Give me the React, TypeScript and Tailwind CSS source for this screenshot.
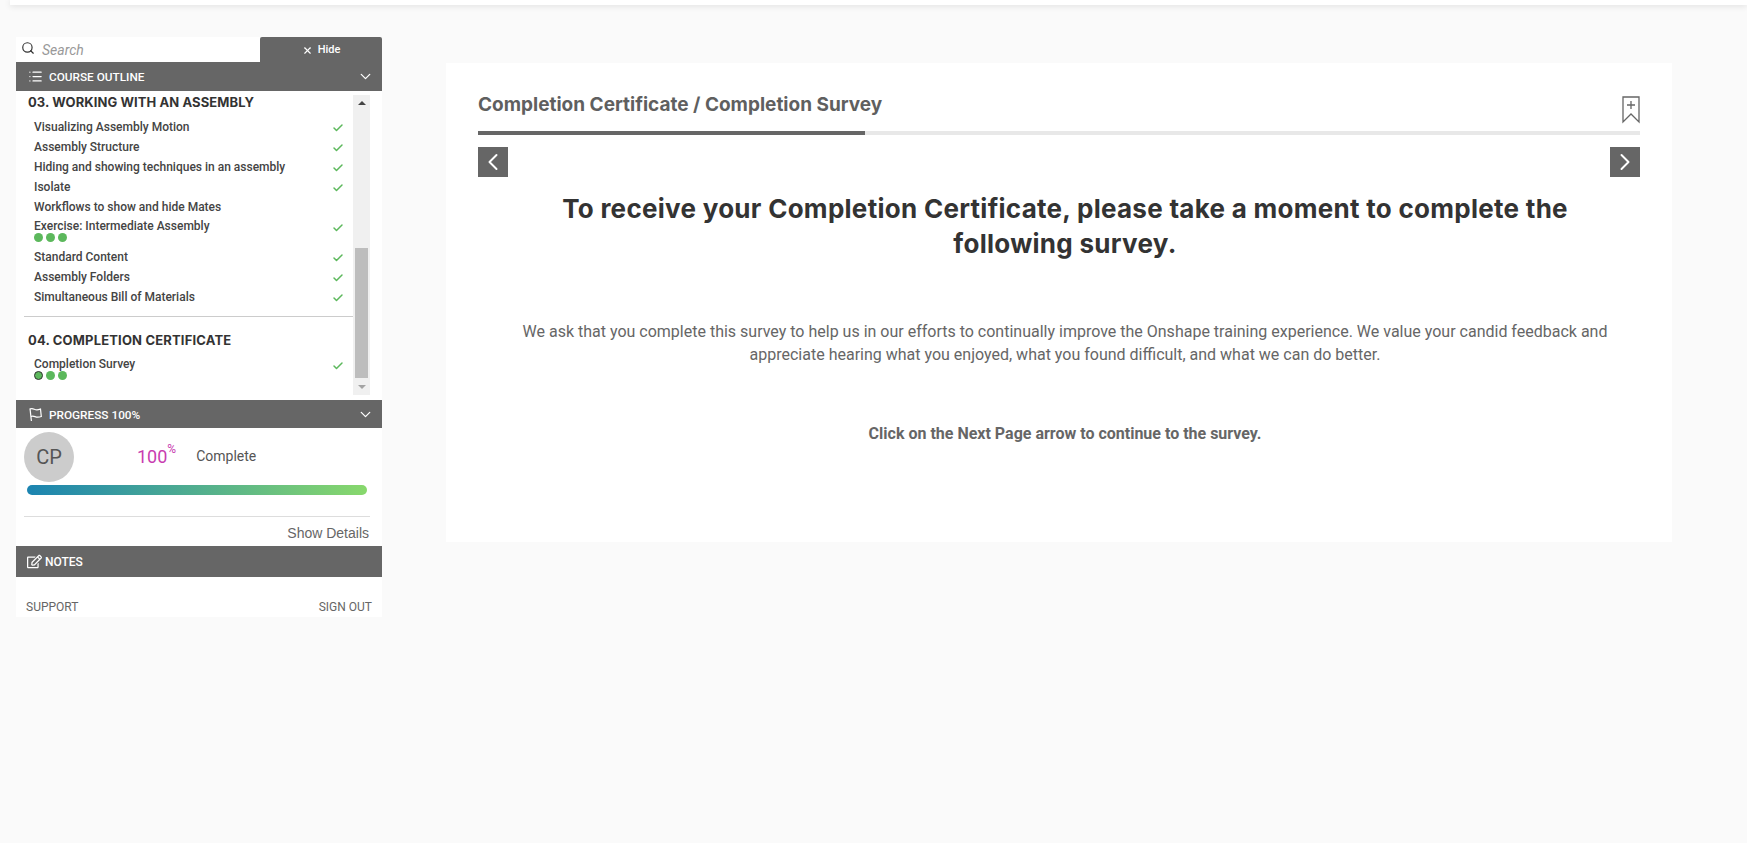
import { Check, ChevronDown, ChevronLeft, ChevronRight, List, Search, X } from 'lucide-react';
import { FaRegEdit } from 'react-icons/fa';

const din = 'font-["Inter","Roboto",sans-serif]';

interface Lesson {
  title: string;
  done: boolean;
  dots?: boolean;
  firstDark?: boolean;
}

const section3: Lesson[] = [
  { title: 'Visualizing Assembly Motion', done: true },
  { title: 'Assembly Structure', done: true },
  { title: 'Hiding and showing techniques in an assembly', done: true },
  { title: 'Isolate', done: true },
  { title: 'Workflows to show and hide Mates', done: false },
  { title: 'Exercise: Intermediate Assembly', done: true, dots: true },
  { title: 'Standard Content', done: true },
  { title: 'Assembly Folders', done: true },
  { title: 'Simultaneous Bill of Materials', done: true },
];

function LessonRow({ lesson }: { lesson: Lesson }) {
  return (
    <div className={`flex items-start pl-[18px] pr-[9px] ${lesson.dots ? 'h-[30px]' : 'h-5'}`}>
      <div className={`flex-1 ${lesson.dots ? 'mt-[-1px]' : ''}`}>
        <div className="text-[12px] leading-5 font-medium text-[#444] h-[18px]">{lesson.title}</div>
        {lesson.dots && (
          <div className="flex gap-[3px] mt-[-1px]">
            <span className={`size-[9px] rounded-full bg-[#5cb85c] ${lesson.firstDark ? 'border border-[#333]' : ''}`} />
            <span className="size-[9px] rounded-full bg-[#5cb85c]" />
            <span className="size-[9px] rounded-full bg-[#5cb85c]" />
          </div>
        )}
      </div>
      {lesson.done && <Check className="size-3 mt-[5px] text-[#5cb85c]" strokeWidth={3} />}
    </div>
  );
}

function Header({ icon, label, labelClass }: { icon: React.ReactNode; label: string; labelClass: string }) {
  return (
    <div className="flex items-center bg-[#666] text-white pl-[12px] pr-[8px] h-full">
      {icon}
      <span className={`text-[11.8px] font-medium ml-[6px] flex-1 ${labelClass}`}>{label}</span>
      <ChevronDown className="size-[17px]" strokeWidth={1.8} />
    </div>
  );
}

export default function App() {
  return (
    <div className='min-h-[843px] bg-[#fafafa] font-["Roboto",sans-serif] text-[#666]'>
      <div className="ml-[10px] h-[5px] bg-white shadow-[0_1px_6px_rgba(0,0,0,0.12)]" />

      <div className="flex items-start pt-[32px] pl-[16px]">
        {/* sidebar */}
        <aside className="w-[366px] flex flex-col">
          <div className="flex h-[25px]">
            <div className="flex-1 flex items-center bg-white pl-[5px]">
              <Search className="size-[14px] text-[#333] mt-[-3px]" strokeWidth={2} />
              <span className="ml-[7px] pt-[2px] text-[14px] italic text-[#999]">Search</span>
            </div>
            <div className="w-[122px] flex items-center justify-center pt-[2px] bg-[#666] rounded-t-[2px] text-white text-[11px] font-medium">
              <X className="size-[11px] mr-[5px]" strokeWidth={2.5} />
              Hide
            </div>
          </div>

          <div className="h-[29px]">
            <Header icon={<List className="size-[15px]" strokeWidth={2} />} label="COURSE OUTLINE" labelClass="pt-[2px]" />
          </div>

          <div className="h-[309px] bg-white flex overflow-hidden">
            <div className="flex-1 overflow-hidden">
              <div className={`${din} pl-[12px] text-[13px] tracking-[0.09px] leading-[22px] font-bold text-[#333] h-[24px]`}>
                03. WORKING WITH AN ASSEMBLY
              </div>
              <div className="pt-[2px]">
                {section3.map((lesson) => (
                  <LessonRow key={lesson.title} lesson={lesson} />
                ))}
              </div>
              <div className="ml-[8px] border-t border-[#ccc] mt-[9px]" />
              <div className={`${din} pl-[12px] pt-[12px] text-[13px] tracking-[0.17px] leading-[22px] font-bold text-[#333] h-[38px]`}>
                04. COMPLETION CERTIFICATE
              </div>
              <LessonRow lesson={{ title: 'Completion Survey', done: true, dots: true, firstDark: true }} />
            </div>
            <div className="w-[17px] h-[300px] mt-[4px] mr-[12px] bg-[#f0f0f0] flex flex-col items-center">
              <div className="h-[16px] flex items-center">
                <div className="w-0 h-0 border-x-[4px] border-x-transparent border-b-[4px] border-b-[#444]" />
              </div>
              <div className="h-[137px]" />
              <div className="w-[13px] h-[130px] bg-[#bdbdbd]" />
              <div className="flex-1 flex items-center">
                <div className="w-0 h-0 border-x-[4px] border-x-transparent border-t-[4px] border-t-[#a3a3a3]" />
              </div>
            </div>
          </div>

          <div className="h-[28px]">
            <Header
              icon={
                <svg width="15" height="15" viewBox="0 0 15 15" fill="none" stroke="#fff" strokeWidth="1.2">
                  <path d="M2 1.5l1.4 12.5" />
                  <path d="M2 2c3-1.3 4.5 1 7 .8 1.5-.1 2.6-.5 3.5-.8l.8 7.5c-1.2.5-2.4.7-3.8.7-2.4 0-3.8-1.8-6.6-.7" />
                </svg>
              }
              label="PROGRESS 100%"
              labelClass="pt-[3px]"
            />
          </div>

          <div className="bg-white h-[118px] flex flex-col">
            <div className="flex items-center pl-[8px] pt-[4px] h-[54px]">
              <div className="size-[50px] rounded-full bg-[#ccc] flex items-center justify-center text-[20px] text-[#555]">
                CP
              </div>
              <div className="ml-[63px] mt-[-2px] text-[18px] text-[#c83cb0] flex items-start">
                100<span className="text-[12px] leading-[10px] mt-[1px]">%</span>
              </div>
              <div className="ml-[20px] mt-[-2px] text-[14px] text-[#555]">Complete</div>
            </div>
            <div className="ml-[11px] mr-[15px] mt-[3px] h-[10px] rounded-full bg-[linear-gradient(90deg,#1b84b1,#88d86c)]" />
            <div className="ml-[8px] mr-[12px] mt-[21px] border-t border-[#ddd]" />
            <div className='text-right pr-[13px] pt-[6px] font-["Liberation_Sans",sans-serif] text-[14px] leading-[20px] text-[#666]'>Show Details</div>
          </div>

          <div className="h-[31px]">
            <div className="flex items-center bg-[#666] text-white pl-[11px] h-full">
              <FaRegEdit className="size-[15px]" />
              <span className="text-[12px] font-medium ml-[3px]">NOTES</span>
            </div>
          </div>

          <div className="bg-white h-[40px] flex justify-between items-end px-[10px] pb-[1px] text-[12px] text-[#666]">
            <span>SUPPORT</span>
            <span>SIGN OUT</span>
          </div>
        </aside>

        {/* main card */}
        <main className="ml-[64px] mt-[26px] w-[1226px] h-[479px] bg-white px-[32px]">
          <div className="flex items-start justify-between pt-[29px] h-[68px]">
            <h2 className={`${din} text-[19px] leading-[26px] font-bold text-[#5f5f5f]`}>
              Completion Certificate / Completion Survey
            </h2>
            <svg width="18" height="28" viewBox="0 0 18 28" fill="none" stroke="#666" strokeWidth="1.3" className="mt-[4px]">
              <path d="M1 1h16v25l-8-8-8 8z" />
              <path d="M9 5v8M5 9h8" />
            </svg>
          </div>
          <div className="h-[4px] bg-[#e8e8e8]">
            <div className="h-full w-[387px] bg-[#666]" />
          </div>
          <div className="flex justify-between mt-[12px]">
            <div className="size-[30px] bg-[#666] flex items-center justify-center text-white">
              <ChevronLeft className="size-[28px]" strokeWidth={1.7} />
            </div>
            <div className="size-[30px] bg-[#666] flex items-center justify-center text-white">
              <ChevronRight className="size-[28px]" strokeWidth={1.7} />
            </div>
          </div>
          <div className="pl-[12px]">
            <h1 className={`${din} mt-[14px] text-center text-[26px] tracking-[0.28px] leading-[35px] font-bold text-[#333]`}>
              To receive your Completion Certificate, please take a moment to complete the
              <br />
              following survey.
            </h1>
            <p className="mt-[59px] text-center text-[16px] leading-[23px] text-[#666]">
              We ask that you complete this survey to help us in our efforts to continually improve the Onshape training experience. We value your candid feedback and
              <br />
              appreciate hearing what you enjoyed, what you found difficult, and what we can do better.
            </p>
            <p className="mt-[56px] text-center text-[16px] leading-[23px] font-bold text-[#666]">
              Click on the Next Page arrow to continue to the survey.
            </p>
          </div>
        </main>
      </div>
    </div>
  );
}
